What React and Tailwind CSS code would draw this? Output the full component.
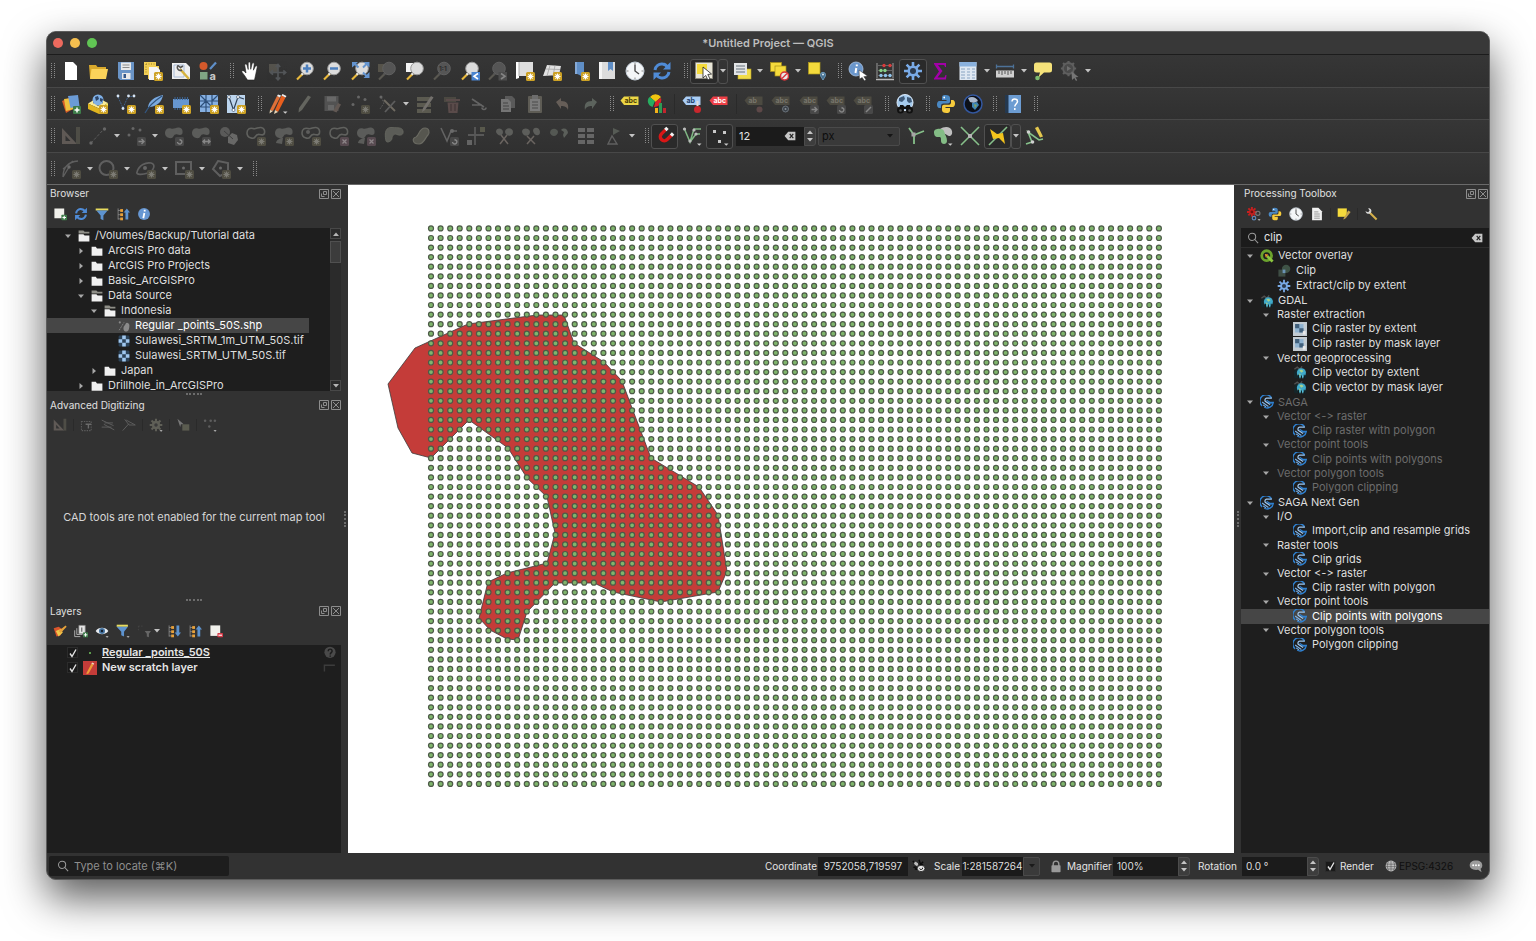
import React, { useState } from 'react';

/* ---------- small shared drawing parts ---------- */

const Star = ({ dim }) => (
  <g>
    <rect x="11" y="11" width="9" height="9" rx="1.5" fill={dim ? '#4f4d42' : '#cda225'} />
    <path d="M15.5 12.5v6M12.5 15.5h6M13.4 13.4l4.2 4.2M17.6 13.4l-4.2 4.2" stroke={dim ? '#7c7b74' : '#fff'} strokeWidth="1.1" />
  </g>
);

const Lens = ({ dim }) => (
  <g>
    <path d="M8 12.5L2 18.5" stroke={dim ? '#5a5851' : '#e9b93d'} strokeWidth="2.2" />
    <path d="M8.6 11.8L6.6 13.8" stroke={dim ? '#555' : '#e8e8e8'} strokeWidth="2" />
    <circle cx="12" cy="7.5" r="6.3" fill={dim ? '#555' : '#dcdcdc'} stroke={dim ? '#606060' : '#9a9a9a'} />
  </g>
);

const Tag = ({ fill = '#4c4a41', color = '#77756b', label = 'abc', children }) => (
  <g>
    <path d="M0.5 6.5L4 2.5H18.5V11H4Z" fill={fill} />
    <text x="4.5" y="9" fontSize="7" fontWeight="700" fill={color} fontFamily="Inter, sans-serif">{label}</text>
    {children}
  </g>
);

const BLOB = 'M1 7C1 3 4 1.5 7 2.500c3 1 5-1.500 8-1s4 3 3.500 5.500-3 2-5 1.500-3 0-4.500 2.500S1 12 1 7Z';

const Blob = ({ children }) => (
  <g>
    <path d={BLOB} fill="#5b5c5a" />
    {children}
  </g>
);

const BlobRing = ({ children }) => (
  <g>
    <path d={BLOB} fill="none" stroke="#60615e" strokeWidth="1.6" />
    {children}
  </g>
);

const DimCross = () => (
  <g>
    <rect x="11" y="11" width="9" height="9" rx="1.5" fill="#574a50" />
    <path d="M13.5 13.5l4 4M17.5 13.5l-4 4" stroke="#8c8487" strokeWidth="1.3" />
  </g>
);

const DimBadge = ({ d }) => (
  <g>
    <rect x="11" y="11" width="9" height="9" rx="1.5" fill="#484848" />
    <path d={d} fill="none" stroke="#868686" strokeWidth="1.4" />
  </g>
);

const GEAR = 'M10 1v18M1 10h18M3.6 3.6l12.8 12.8M16.4 3.6L3.6 16.4';
const TAIL = 'M15 17.5h4.5l-2.2 2.2Z';
const MOVE = 'M12.5 15.5h5M15.5 13l2.5 2.5-2.5 2.5';
const TURN = 'M13.5 16a2.2 2.2 0 104-1.5l-2-1';

/* ---------- icon drawings, all on a 20 x 20 grid ---------- */

const ICONS = {
  'new project': <path d="M4 1h8l4 4v14H4Z" fill="#fff" />,
  'open project': (
    <g>
      <path d="M1 4h7l1.5 2H18v11H2Z" fill="#d9a92c" />
      <path d="M3.5 8H20l-2 10H2Z" fill="#fbd35a" />
    </g>
  ),
  'save project': (
    <g>
      <path d="M2 1h16v18H4l-2-2Z" fill="#6a94c6" />
      <rect x="5" y="1.5" width="10" height="7.5" fill="#e9e9e9" />
      <path d="M6.5 4h7M6.5 6.500h7" stroke="#8b8b8b" />
      <rect x="6" y="12" width="8.5" height="6" fill="#e9e9e9" />
      <rect x="7.5" y="13" width="2.5" height="4" fill="#35588a" />
    </g>
  ),
  'new print layout': (
    <g>
      <path d="M1 1h12v4h3v13H5v-4H1Z" fill="#f2cf55" />
      <path d="M6 6h8l3 3v10H6Z" fill="#f5f5f5" />
      <path d="M3 3v10M3 3h9" stroke="#9a7f25" strokeDasharray="1 1.5" />
      <Star />
    </g>
  ),
  'layout manager': (
    <g>
      <path d="M1 2h14l4 4v12H1Z" fill="#efefef" />
      <path d="M3 4h10v12H3Z" fill="none" stroke="#a9bcd8" />
      <path d="M9 8l9 10" stroke="#d7b33c" strokeWidth="2.4" />
      <path d="M7 4.5c-2 3 1 6 4 4.5M7 4.5l2.5 2L12 5" fill="none" stroke="#555" strokeWidth="1.5" />
    </g>
  ),
  'style manager': (
    <g>
      <circle cx="5.5" cy="5" r="4" fill="#d4592b" />
      <path d="M12 8l6-6.5" stroke="#5f8fc9" strokeWidth="2.2" />
      <rect x="2" y="11" width="7.5" height="7.5" fill="#7fa585" />
      <text x="11.5" y="18.5" fontSize="11" fontWeight="700" fill="#c9c9c9" fontFamily="Inter, sans-serif">a</text>
    </g>
  ),
  pan: (
    <path d="M7.5 19C5 15 3.5 13 2 11.2c-.8-1.4 1-2.2 2.2-.9L6 12 4.8 4.5c-.2-1.7 1.7-2 2.2-.4L8.200 8.500V2c.1-1.500 2.100-1.500 2.200 0l.3 6.300 1.400-5.600c.5-1.400 2.300-1 2.100.5L13.400 9.200l1.900-3.800c.7-1.200 2.200-.5 1.900.8L15.800 13l-1.300 6Z" fill="#fff" stroke="#222" strokeWidth=".6" />
  ),
  'pan to selection': (
    <g opacity=".75">
      <path d="M2 3h9v8H2Z" fill="#5f5d55" />
      <path d="M11 4v15M3.5 11.5h15M8.8 6L11 3.5 13.2 6M8.8 16.5l2.2 2.3 2.2-2.3M6 9.3l-2.5 2.2L6 13.7M16.3 9.3l2.4 2.2-2.4 2.2" fill="none" stroke="#5e6266" strokeWidth="1.7" />
    </g>
  ),
  'zoom in': <g><Lens /><path d="M12 3.5v8M8 7.5h8" stroke="#4d7fbd" strokeWidth="2.5" /></g>,
  'zoom out': <g><Lens /><path d="M8 7.5h8" stroke="#4d7fbd" strokeWidth="2.5" /></g>,
  'zoom full': (
    <g>
      <Lens />
      <path d="M2 1h6L6.200 2.800l3 3-1.400 1.400-3-3L2 6.500ZM19.500 1h-6l1.800 1.800-3 3 1.400 1.400 3-3 2.800 2.300ZM19.500 17h-6l1.800-1.800-3-3 1.400-1.400 3 3 2.800-2.800Z" fill="#6494cf" />
    </g>
  ),
  'zoom to selection': <g><path d="M1 3h9v8H1Z" fill="#56534a" /><Lens dim /></g>,
  'zoom to layer': <g><path d="M1 2h9v9H1Z" fill="#f4f4f4" /><Lens /></g>,
  'zoom native': (
    <g>
      <Lens dim />
      <text x="7" y="10" fontSize="6.500" fontWeight="700" fill="#2d2d2d" fontFamily="Inter, sans-serif">1:1</text>
    </g>
  ),
  'zoom last': <g><Lens /><rect x="11.5" y="11" width="8.5" height="8.5" fill="#4a84cf" /><path d="M18 12.5l-4 2.7 4 2.8" fill="none" stroke="#fff" strokeWidth="1.6" /></g>,
  'zoom next': <g><Lens dim /><rect x="11.5" y="11" width="8.5" height="8.5" fill="#4c4c4c" /><path d="M14 12.5l4 2.7-4 2.8" fill="none" stroke="#858585" strokeWidth="1.6" /></g>,
  'new map view': (
    <g>
      <path d="M1 1h17v14H1Z" fill="#dedede" />
      <path d="M1 1h3v16l-3 1Z" fill="#fff" />
      <path d="M4 1v14" stroke="#aaa" />
      <Star />
    </g>
  ),
  'new 3d map view': (
    <g>
      <path d="M5 4l14 1-2 9L1 15Z" fill="#e2e2e2" />
      <path d="M4 8l14 .5M8 4.5L5 15M13 4.5L11 15" stroke="#a5a5a5" strokeWidth=".8" />
      <Star />
    </g>
  ),
  'new bookmark': <g><path d="M5 1h9v16l-4.5-3L5 12Z" fill="#5f8ec6" /><path d="M5 1h2v12H5Z" fill="#86aad6" /><Star /></g>,
  'show bookmarks': (
    <g>
      <path d="M2 1h16v17H2Z" fill="#dcdcdc" />
      <path d="M2 1h3v17H2Z" fill="#f4f4f4" />
      <path d="M11 1h5v9l-2.5-2L11 10Z" fill="#5f8ec6" />
    </g>
  ),
  'temporal controller': (
    <g>
      <circle cx="10" cy="10" r="9" fill="#f4f6f8" stroke="#c9d3dd" />
      <path d="M10 3.5V10l4 3" fill="none" stroke="#4a4a4a" strokeWidth="1.4" />
      <path d="M10 1.500v2M10 16.500v2M1.500 10h2M16.500 10h2" stroke="#8a8a8a" />
    </g>
  ),
  refresh: (
    <g fill="none" stroke="#4f8bd6" strokeWidth="3">
      <path d="M3 9c.5-4 4-6.500 7.500-6 2.300.2 4 1.500 5 3" />
      <path d="M17 11c-.5 4-4 6.500-7.500 6-2.300-.2-4-1.500-5-3" />
      <path d="M18.500 1v7.500H11ZM1.500 19v-7.500H9Z" fill="#4f8bd6" stroke="none" />
    </g>
  ),
  'select features': (
    <g>
      <rect x="1.5" y="1.5" width="17" height="16" fill="#e8e6d8" stroke="#8d8a7d" strokeDasharray="2 1.5" />
      <rect x="3" y="3" width="10" height="10" fill="#f5db3c" />
      <path d="M9 6l8.5 7-3.7.5 2.2 4.5-2.200 1-2-4.500L9 17Z" fill="#fff" stroke="#222" strokeWidth=".8" />
    </g>
  ),
  'select by value': (
    <g>
      <rect x="6" y="8" width="13" height="10" fill="#f1dc49" stroke="#b8a224" strokeWidth=".6" />
      <rect x="2" y="2" width="13" height="12" fill="#e2e4e6" />
      <path d="M4 5h9M4 8h9M4 11h9" stroke="#8f979f" strokeWidth="1.3" />
    </g>
  ),
  'deselect all': (
    <g>
      <rect x="1.5" y="1.5" width="11" height="9" fill="#f5db3c" stroke="#a58f18" strokeWidth=".7" />
      <rect x="6" y="5" width="11" height="10" fill="#f5db3c" stroke="#a58f18" strokeWidth=".7" />
      <circle cx="15.5" cy="15" r="4" fill="#e9e9e9" stroke="#d8343a" strokeWidth="1.5" />
      <path d="M13 17.5l5-5" stroke="#d8343a" strokeWidth="1.5" />
    </g>
  ),
  'select by location': (
    <g>
      <rect x="1.5" y="1.5" width="11.5" height="11.5" fill="#f5db3c" stroke="#b09a1c" strokeWidth=".7" />
      <path d="M16 19c-1.5-2.5-2.500-3.500-2.500-5.200a2.500 2.500 0 015 0c0 1.700-1 2.700-2.500 5.200Z" fill="#45708f" stroke="#79a7cd" strokeWidth=".8" />
      <circle cx="16" cy="13.5" r="1" fill="#dbe8f2" />
    </g>
  ),
  identify: (
    <g>
      <circle cx="8" cy="8" r="7" fill="#6b97cc" stroke="#a9c4e6" strokeWidth=".8" />
      <path d="M8.8 3.5v1.8M8.3 7l-.8 5" stroke="#fff" strokeWidth="2" />
      <path d="M11 9l8.5 6-3.7.7 2.200 3-1.600 1-2.200-3.200L11.500 18Z" fill="#fff" stroke="#333" strokeWidth=".5" />
    </g>
  ),
  'field calculator': (
    <g>
      <path d="M2 2v15M18 2v15" stroke="#8a8a8a" strokeWidth="1.2" />
      <path d="M2 4.5h16M2 9.5h16M2 14.5h16" stroke="#666" />
      <path d="M1 18.5h18" stroke="#bcbcbc" strokeWidth="1.5" />
      <g fill="#d93b3b"><circle cx="9" cy="4.5" r="1.7" /><circle cx="15" cy="4.5" r="1.7" /></g>
      <g fill="#86cf86"><circle cx="6" cy="9.5" r="1.7" /><circle cx="10" cy="9.5" r="1.7" /></g>
      <g fill="#8fc3ea"><circle cx="6" cy="14.5" r="1.7" /><circle cx="10.5" cy="14.5" r="1.7" /><circle cx="15" cy="14.5" r="1.7" /></g>
    </g>
  ),
  toolbox: (
    <g>
      <path d={GEAR} stroke="#79aae6" strokeWidth="2.6" />
      <circle cx="10" cy="10" r="5.5" fill="#79aae6" />
      <circle cx="10" cy="10" r="3" fill="#2c3a4d" />
    </g>
  ),
  statistics: <path d="M4 2h12v4h-1l-.8-2H8l4.500 6L7.500 16.500h7l1-2.500h1L16 18.500H4v-1L9 10.500 4 3Z" fill="#a300a8" />,
  'attribute table': (
    <g>
      <rect x="1.5" y="1" width="17" height="18" fill="#dfe8f2" />
      <rect x="1.5" y="1" width="17" height="4.5" fill="#8ab1dd" />
      <path d="M3 8h4M3 11h4M3 14h4M3 17h4M9 8h3M9 11h3M9 14h3M9 17h3M14 8h3M14 11h3M14 14h3M14 17h3" stroke="#8aa4c2" strokeWidth="1.2" />
    </g>
  ),
  measure: (
    <g>
      <path d="M1 5.5h18M1.5 3.5v4M18.5 3.5v4" stroke="#4d7298" strokeWidth="1.3" />
      <rect x="1" y="9.5" width="18" height="7" fill="#d0d0d0" />
      <path d="M4 10v3M7 10v4M10 10v3M13 10v4M16 10v3" stroke="#555" />
    </g>
  ),
  'map tips': (
    <g>
      <path d="M3.5 1.500h13a2.500 2.500 0 012.500 2.500v5a2.500 2.500 0 01-2.500 2.500H11L5.500 16.500 7 11.500H3.500A2.500 2.500 0 011 9V4a2.500 2.500 0 012.500-2.500Z" fill="#f5e27a" />
      <circle cx="4.5" cy="17" r="2.3" fill="#7cba6f" />
    </g>
  ),
  'run action': (
    <g>
      <path d={GEAR} stroke="#5f5f5f" strokeWidth="2.6" transform="translate(0 -1) scale(.85)" />
      <circle cx="8.5" cy="7.5" r="5.5" fill="#4a4a4a" stroke="#5f5f5f" strokeWidth="1.8" />
      <path d="M7 5v5l4-2.5Z" fill="#6f6f6f" />
      <path d="M11.5 10.5l7 5.5-3 .3 1.700 3-1.200.7-1.700-3-2.300 2Z" fill="#757575" />
    </g>
  ),

  'data source manager': (
    <g>
      <path d="M1 7l7-3 4 11-7 4Z" fill="#d65c28" />
      <path d="M3 5l8-1 2 11-8 2Z" fill="#eec13e" />
      <path d="M7 2l10-1 1.5 11-9 2Z" fill="#6b9bd6" />
      <rect x="12" y="12" width="8" height="8" rx="1" fill="#3e7d4a" />
      <path d="M16 13.5v5M13.5 16h5" stroke="#fff" strokeWidth="1.5" />
    </g>
  ),
  'new geopackage layer': (
    <g>
      <circle cx="10" cy="6" r="5.5" fill="#7fb0e6" />
      <path d="M7 3l3-1 1 3-3 2ZM12 4l3 1-1 3-2-1Z" fill="#2d4568" />
      <path d="M0 9.500l5-3V9l5 3 5-3V6.500l5 2.500-9 5.500Z" fill="#f9ec9a" />
      <path d="M0 9.500l11 5V20L0 15Z" fill="#e0b51f" />
      <path d="M11 14.5L20 9v6L11 20Z" fill="#f8e85a" />
      <Star />
    </g>
  ),
  'new shapefile layer': (
    <g>
      <path d="M2 3L7 14L12 2.5H18" fill="none" stroke="#41628a" strokeDasharray="2 1" />
      <g fill="#d7e5f5"><circle cx="2" cy="2" r="1.4" /><circle cx="7" cy="14.5" r="1.4" /><circle cx="12.5" cy="2" r="1.4" /><circle cx="18" cy="2" r="1.4" /></g>
      <Star />
    </g>
  ),
  'new spatialite layer': (
    <g>
      <path d="M4 13C5 6 11 3 19 1c-1 6-5 11-13 12Z" fill="#7aaae0" />
      <path d="M1 19C4 13 9 8 18 2" fill="none" stroke="#32557f" strokeWidth="1.3" />
      <Star />
    </g>
  ),
  'new temporary layer': (
    <g>
      <rect x="2" y="5" width="16" height="9" fill="#6696d0" />
      <path d="M4 3v3M6.5 3v3M9 3v3M11.5 3v3M14 3v3M16.5 3v3M4 14v2M6.5 14v2M9 14v2" stroke="#3c638f" />
      <Star />
    </g>
  ),
  'new mesh layer': (
    <g>
      <rect x="1" y="1" width="18" height="17" fill="#86b0e2" />
      <path d="M1 7h18M1 13h18M7 1v17M13 1v17M1 1l6 6M7 7l6 6M13 7l6-6M1 13l6-6M13 13l6 5" stroke="#2d4f7a" strokeWidth="1.2" />
      <Star />
    </g>
  ),
  'new virtual layer': (
    <g>
      <rect x="1" y="1" width="18" height="18" fill="#bcd5ee" />
      <path d="M3 3L7.5 16 12 3l6 2" fill="none" stroke="#2f4257" strokeWidth="1.2" />
      <g fill="#fff" stroke="#2f4257" strokeWidth=".6"><circle cx="3" cy="3" r="1.5" /><circle cx="7.5" cy="16" r="1.5" /><circle cx="12" cy="3" r="1.5" /></g>
      <Star />
    </g>
  ),
  'current edits': (
    <g>
      <path d="M2 16L9 2l3 1.5L5 17Z" fill="#e07038" />
      <path d="M7 16L13.5 1.5l4 2L10 18Z" fill="#e85f1e" />
      <path d="M9 2l1-1.500 3 1-1 2ZM13.500 1.500l1-1.500 4 2-1 1.500Z" fill="#eee" />
      <path d="M2 16l3 1-3.500 2.500ZM7 16l3 2-4 2Z" fill="#e6d6b8" />
      <path d={TAIL} fill="#ccc" />
    </g>
  ),
  'toggle editing': <path d="M4 14L13 1.5l3 1.5L7 16l-3.5 2.5Z" fill="#64655f" />,
  'save edits': (
    <g opacity=".8">
      <rect x="1.5" y="2" width="14" height="15" fill="#5a5a5a" />
      <rect x="4" y="2.5" width="9" height="5" fill="#757575" />
      <rect x="5" y="11" width="6" height="5" fill="#757575" />
      <path d="M10 17l5-8 3 1.5-4.5 8Z" fill="#6e625c" />
    </g>
  ),
  'add point feature': <g><g fill="#666"><circle cx="3" cy="10.5" r="1.5" /><circle cx="8.5" cy="3" r="1.5" /><circle cx="15" cy="5.5" r="1.5" /></g><Star dim /></g>,
  'vertex tool': (
    <g>
      <path d="M3 3l3 6-4 6" fill="none" stroke="#585858" strokeDasharray="2 1" />
      <path d="M6 6l11 11" stroke="#6f6b62" strokeWidth="1.8" />
      <path d="M17 7L7 18" stroke="#5e5e5e" strokeWidth="1.8" />
      <circle cx="3" cy="3" r="1.5" fill="#686868" />
    </g>
  ),
  'modify attributes': (
    <g>
      <path d="M2 3h14v4H2ZM2 9h14v4H2ZM2 15h14v4H2Z" fill="#5b5a50" />
      <path d="M8 14l8-12 2.5 1.5L10 16l-3 2Z" fill="#73706c" />
    </g>
  ),
  'delete selected': (
    <g>
      <path d="M2 3h12v5H2Z" fill="#4b4841" />
      <path d="M4 5h14v2H4ZM5.5 8.500h11L15.500 19h-9Z" fill="#5a4b4a" />
      <path d="M9 10v7M13 10v7" stroke="#3c3232" />
    </g>
  ),
  'cut features': <path d="M2 5l12 8M2 11h10M12 13.5a2 2 0 104 0" fill="none" stroke="#646464" strokeWidth="1.6" />,
  'copy features': <g><path d="M7 2h7l3 3v9H7Z" fill="#5a5a5a" /><path d="M3 5h7l3 3v10H3Z" fill="#757575" /><path d="M5 9h5M5 12h6M5 15h6" stroke="#444" /></g>,
  'paste features': <g><rect x="3" y="2" width="14" height="17" rx="1" fill="#5e5c55" /><rect x="5" y="5" width="10" height="12" fill="#7c7c7c" /><rect x="7" y="1" width="6" height="4" fill="#6d6d6d" /><path d="M7 8h6M7 11h6M7 14h6" stroke="#4a4a4a" /></g>,
  undo: <path d="M3 8l5-4v3c6 0 8 3 7 9-1-3-3-4-7-4v3Z" fill="#665e58" />,
  redo: <path d="M17 8l-5-4v3c-6 0-8 3-7 9 1-3 3-4 7-4v3Z" fill="#5c635d" />,
  'layer labeling': <Tag fill="#ecd646" color="#4a3d05" />,
  'layer diagram': (
    <g>
      <path d="M3 3a7 7 0 0111 0L8.500 8Z" fill="#f1c40f" />
      <path d="M8 7L2.500 3a6 6 0 003 10Z" fill="#27ae60" />
      <path d="M8.500 7.500L14 4a7 7 0 01-7 9Z" fill="#d8232a" />
      <path d="M8 19v-5h3v5Z" fill="#f3b21b" /><path d="M12 19V9h3v10Z" fill="#2f9a55" /><path d="M16 19v-5h3v5Z" fill="#c1262d" />
    </g>
  ),
  'highlight pinned labels': <Tag fill="#a9cdf5" color="#20406a" label="ab"><circle cx="15.5" cy="15.5" r="3.5" fill="#c9272d" /><path d="M15.500 7v5" stroke="#ddd" strokeWidth="2" /></Tag>,
  'unplaced labels': <Tag fill="#ee4047" color="#fff" />,
  'pin labels': <Tag label="ab"><circle cx="15.5" cy="15.5" r="3" fill="#5d4848" /></Tag>,
  'show hide labels': <Tag><circle cx="14.5" cy="15" r="3" fill="#3a4148" stroke="#6b737b" /><circle cx="14.5" cy="15" r="1" fill="#8a8f95" /></Tag>,
  'move label': <Tag><DimBadge d={MOVE} /></Tag>,
  'rotate label': <Tag><DimBadge d={TURN} /></Tag>,
  'change label': <Tag><DimBadge d="M13 18l5-5" /></Tag>,
  metasearch: (
    <g>
      <circle cx="10" cy="8.5" r="8" fill="#a5cbee" stroke="#dcebfa" />
      <path d="M4 4l5-2 1 3-3 3-3-1ZM12 3l4 1 1 4-3 1-2-2Z" fill="#3d5876" />
      <circle cx="5.5" cy="16" r="3.5" fill="#111" /><circle cx="14.5" cy="16" r="3.5" fill="#111" />
      <path d="M5 11h3l2 2 2-2h3v4H5Z" fill="#111" />
      <circle cx="5.5" cy="16.5" r="1.3" fill="#555" /><circle cx="14.5" cy="16.5" r="1.3" fill="#555" />
    </g>
  ),
  python: (
    <g>
      <path d="M9.5 1C6 1 6 2.5 6 4v2h4.5v1H3.500C1.500 7 1 9 1 10.500S1.500 14 3.500 14H5v-2c0-1.700 1.200-2.500 2.500-2.500h4.500c1 0 2-.8 2-2V4c0-2-1.500-3-4.500-3Z" fill="#4a88c2" />
      <path d="M10.5 19c3.5 0 3.5-1.500 3.500-3v-2H9.500v-1h7c2 0 2.500-2 2.500-3.500S18.500 6 16.500 6H15v2.500c0 1.500-1.200 2.300-2.500 2.300H8c-1 0-2 .8-2 2V16c0 2 1.500 3 4.500 3Z" fill="#f6cb3c" />
      <circle cx="8.2" cy="3.5" r=".9" fill="#fff" />
    </g>
  ),
  'globe plugin': (
    <g>
      <circle cx="10" cy="10" r="9" fill="#0c1019" stroke="#33579f" strokeWidth="1.5" />
      <path d="M5 4c4-2 8-1 10 3l-4 2-4-1Z" fill="#aab8cc" />
      <path d="M9 9l5-1 2 3-4 5-3-3Z" fill="#3e84b4" /><path d="M11 10l3 1-2 3Z" fill="#86a35c" />
    </g>
  ),
  help: (
    <g>
      <rect x="2" y="1" width="16" height="18" fill="#6c9cd2" />
      <path d="M2 1h3.5v18H2Z" fill="#24384f" />
      <path d="M9 7.500c0-3.500 5.500-3.500 5.500 0 0 2.200-2.700 2.300-2.700 5M11.800 14v2" fill="none" stroke="#fff" strokeWidth="1.5" />
    </g>
  ),

  'cad tools': <g><path d="M1 2l15 16H1ZM4.500 9.500V15h5Z" fill="#5f5955" fillRule="evenodd" /><rect x="15" y="1" width="4" height="17" fill="#4e4d46" /></g>,
  'digitize segment': <g><path d="M3 17L16 3" stroke="#5c5c5c" strokeDasharray="3 1.5" /><circle cx="3" cy="17" r="1.7" fill="#666" /><circle cx="16.5" cy="3" r="1.7" fill="#666" /></g>,
  'move feature': <g><g fill="#666"><circle cx="3" cy="9" r="1.5" /><circle cx="7" cy="2.5" r="1.5" /><circle cx="14" cy="4" r="1.5" /></g><DimBadge d={MOVE} /></g>,
  'rotate feature': <Blob><DimBadge d={TURN} /></Blob>,
  'scale feature': <Blob><DimBadge d="M12.5 15.500h6M14 13.500l-2 2 2 2M17 13.500l2 2-2 2" /></Blob>,
  'simplify feature': <g><circle cx="6" cy="6" r="5" fill="#5a5a59" /><path d="M9 11l4-4 5 2 1 5-4 5-6-2Z" fill="#686867" /><path d="M5 5l9 8" stroke="#3f3f3f" /></g>,
  'add ring': <BlobRing><Star dim /></BlobRing>,
  'add part': <Blob><path d="M2 17c0-3 4-5 7-5l-1 6Z" fill="#5b5c5a" /><Star dim /></Blob>,
  'fill ring': <BlobRing><circle cx="7" cy="6" r="2" fill="#5d5d5c" /><Star dim /></BlobRing>,
  'delete ring': <BlobRing><DimCross /></BlobRing>,
  'delete part': <Blob><path d="M2 17c0-3 4-5 7-5l-1 6Z" fill="#5b5c5a" /><DimCross /></Blob>,
  'reshape features': <path d="M2 15C0 6 2 1 8 1.500s10-.5 11 3.500-3 5-6 3.500-5 1.500-5 4-5 5-6 2.500Z" fill="#5b5c57" stroke="#686962" strokeWidth=".8" />,
  'offset curve': <path d="M5 11c3-1 3-9 9-9 4 0 5 4 3 7-3 3-4 9-9 9-7 0-7-6-3-7Z" fill="#56564f" stroke="#6a6a62" strokeWidth="1.2" />,
  'split features': <g><path d="M2 2l6 13 4-10h6" fill="none" stroke="#636363" strokeWidth="1.6" /><circle cx="13" cy="5" r="2" fill="#6a6a6a" /><DimBadge d={TURN} /></g>,
  'split parts': <g><path d="M9 1v18M2 9h16" stroke="#585858" strokeWidth="1.8" /><path d="M1 14h5v5H1Z" fill="#646464" /><path d="M14 1h5v5h-5Z" fill="#59594c" /></g>,
  'merge features': <g><path d="M2 6c0-5 7-4 7 0s-5 5-7 0ZM11 6c0-5 8-5 8 0s-7 5-8 0Z" fill="#5d5e5b" /><path d="M7 9l7 9M13 9l-7 9" stroke="#6a6460" strokeWidth="1.5" /></g>,
  'merge attributes': <g><path d="M1 6c0-5 8-4 8 0s-6 6-8 0ZM12 5c0-5 7-4 7 1s-6 4-7-1Z" fill="#5d5e5b" /><path d="M6 10l8 8M13 10l-7 8" stroke="#6a6460" strokeWidth="1.5" /></g>,
  'join features': <g><path d="M1 7c0-6 8-5 8-1s-6 6-8 1Z" fill="#545853" /><path d="M12 4c3-3 7-1 7 3l-4 5-1-3 1-3Z" fill="#5b5f5a" /></g>,
  'attribute blocks': <path d="M2 2h7v4H2ZM2 8h7v4H2ZM2 14h7v4H2ZM11 2h7v4h-7ZM11 8h7v4h-7ZM11 14h7v4h-7Z" fill="#666" />,
  'trim extend': <g><path d="M4 18h9l-5-8Z" fill="none" stroke="#606060" strokeWidth="1.4" /><path d="M9 2l7 3-7 4Z" fill="#565b55" /></g>,
  'enable snapping': (
    <g transform="rotate(45 10 10)">
      <path d="M6 5v6a4 4 0 008 0V5" fill="none" stroke="#d81616" strokeWidth="3.4" />
      <path d="M4.3 2.500h3.400v3H4.300ZM12.300 2.500h3.400v3h-3.400Z" fill="#f2f2f2" />
    </g>
  ),
  'snapping layers': (
    <g>
      <path d="M2 2l6 14 4-13h7M8 16l6-8h4" fill="none" stroke="#7fb783" strokeWidth="1.5" />
      <g fill="#bcbcbc"><circle cx="2.5" cy="3" r="1.6" /><circle cx="8" cy="15" r="1.6" /><circle cx="12" cy="4" r="1.6" /><circle cx="14" cy="8" r="1.6" /></g>
      <path d={TAIL} fill="#ccc" />
    </g>
  ),
  'snapping type': <g fill="#c9c9c9"><rect x="4" y="4" width="3" height="3" /><rect x="14" y="5" width="3" height="3" /><rect x="9" y="14" width="3" height="3" /><path d={TAIL} /></g>,
  'topological editing': <g><path d="M3 2l5 7 10-4M8 9v9" fill="none" stroke="#86c08a" strokeWidth="1.8" /><rect x="5.5" y="6.5" width="4" height="4" fill="#a5a5a5" /></g>,
  'avoid overlap': <g><path d="M7 3c4-3 11-3 12 2s-3 6-5 4-5-1-7-2Z" fill="#bfbfbf" /><path d="M1 6c0-4 9-4 10-1 1 4 3 6 3 10s-6 4-6 0 0-4-3-4-4-2-4-5Z" fill="#84bd86" /><path d={TAIL} fill="#ccc" /></g>,
  'snap intersection': <g><path d="M1 1l18 18M19 1L1 19" stroke="#86c08a" strokeWidth="1.6" /><rect x="8" y="8" width="4" height="4" fill="#b5b5b5" /></g>,
  tracing: <g><path d="M1 19L19 1" stroke="#86c08a" strokeWidth="1.6" /><path d="M2 3l7 5 6-1 2 11-6-6-6 1Z" fill="#f3c31c" /></g>,
  'self snapping': <g><path d="M1 18l6-2-4-10 11 8 4-1" fill="none" stroke="#86c08a" strokeWidth="1.6" /><path d="M10 2l3-1.500 5 10-3 1Z" fill="#e5c84e" /><g fill="#d0d0d0"><circle cx="3.5" cy="6" r="1.8" /><circle cx="7.5" cy="16" r="1.8" /></g></g>,

  'add circular string': <g><path d="M2 18C2 9 6 3 17 2M2 10L12 2M8 8L2 18" fill="none" stroke="#5f5f5f" strokeWidth="1.4" /><circle cx="8" cy="8" r="1.7" fill="#6b6b6b" /><Star dim /></g>,
  'add circle': <g><circle cx="8.5" cy="9" r="7" fill="none" stroke="#5f5f5f" strokeWidth="2" /><Star dim /></g>,
  'add ellipse': <g><path d="M1 13C3 6 10 3 15 4s3 8-3 10-12 2-11-1Z" fill="none" stroke="#5f5f5f" strokeWidth="1.7" /><circle cx="9" cy="9" r="2" fill="#666" /><Star dim /></g>,
  'add rectangle': <g><rect x="2" y="3" width="15" height="12" fill="none" stroke="#5f5f5f" strokeWidth="2" /><circle cx="9.5" cy="9" r="1.5" fill="#6b6b6b" /><Star dim /></g>,
  'add regular polygon': <g><path d="M7 2l10 2v9l-8 4L2 10Z" fill="none" stroke="#5f5f5f" strokeWidth="2" /><circle cx="9.5" cy="9" r="1.5" fill="#6b6b6b" /><Star dim /></g>,

  'add selected layers': <g><path d="M2 2h14v14H2Z" fill="#f1f1ec" /><rect x="12" y="11" width="8" height="8" rx="1" fill="#3e7d4a" /><path d="M16 12.500v5M13.500 15h5" stroke="#fff" strokeWidth="1.6" /></g>,
  'filter browser': <g><path d="M1 2h18v3H1Z" fill="#e8dc5f" /><path d="M2 5h16l-6 7v7l-4-2v-5Z" fill="#5d93cf" /></g>,
  'collapse all': <g><path d="M3 2v16M3 5h4M3 11h4M3 17h4" fill="none" stroke="#9a9a9a" /><g fill="#e8a13a"><rect x="6" y="3" width="4" height="4" /><rect x="6" y="9" width="4" height="4" /><rect x="6" y="15" width="4" height="4" /></g><path d="M13.500 18V8H11l4.500-6L20 8h-2.500v10Z" fill="#5d93cf" /></g>,
  'expand all': <g><path d="M3 2v16M3 5h4M3 11h4M3 17h4" fill="none" stroke="#9a9a9a" /><g fill="#e8a13a"><rect x="6" y="3" width="4" height="4" /><rect x="6" y="9" width="4" height="4" /><rect x="6" y="15" width="4" height="4" /></g><path d="M13.500 2v10H11l4.500 6 4.500-6h-2.500V2Z" fill="#5d93cf" /></g>,
  properties: <g><circle cx="10" cy="10" r="8.5" fill="#6797d2" /><path d="M11 4v2.500M10.500 8.500L9 16" stroke="#fff" strokeWidth="2.6" /></g>,
  'floater settings': <g><path d="M2 5h14v13H2Z" fill="none" stroke="#5c5c5c" strokeWidth="1.5" strokeDasharray="2 1.5" /><path d="M8 9h8M12 9v6" stroke="#6b6b6b" strokeWidth="2" /></g>,
  parallel: <path d="M1 3l17 8M4 9l15 8M1 13h14M5 7h12" stroke="#5d5d5d" strokeWidth="1.4" />,
  perpendicular: <path d="M4 2l6 8 9 0M10 8L1 18M6 3l13 7" fill="none" stroke="#5d5d5d" strokeWidth="1.4" />,
  'construction settings': <g><path d={GEAR} stroke="#5f5f57" strokeWidth="3" /><circle cx="10" cy="10" r="6" fill="#5f5f57" /><circle cx="10" cy="10" r="2.5" fill="#3a3a3a" /><path d={TAIL} fill="#ccc" /></g>,
  'construction mode': <g><path d="M2 1l9 8H7l-1 4Z" fill="#777" /><rect x="9" y="9" width="10" height="9" fill="#5b5c50" /></g>,
  'construction layer': <g fill="#5e5e5e"><circle cx="3" cy="4" r="1.8" /><circle cx="11" cy="4" r="1.8" /><circle cx="17" cy="4" r="1.8" /><circle cx="9" cy="12" r="1.8" /><path d={TAIL} fill="#ccc" /></g>,
  'layer styling': <g><path d="M1 6l7-2 6 4-3 8-6 2Z" fill="#d9552c" /><path d="M4 10l7-3 3 5-6 6Z" fill="#f0c84a" /><path d="M8 10l10-8 1.500 2L11 13Z" fill="#e4a23b" /></g>,
  'add group': <g><path d="M1 9v9h8M4 6v9h8" fill="none" stroke="#b4b4b4" strokeWidth="1.3" /><path d="M7 2h9v12H7Z" fill="#e5e5e5" stroke="#8a8a8a" /><path d="M11 5v6" stroke="#777" strokeWidth="2" /><rect x="13" y="12" width="7" height="7" fill="#3e7d4a" /><path d="M16.500 13v5M14 15.500h5" stroke="#fff" strokeWidth="1.4" /></g>,
  'manage themes': <g><path d="M1 10C5 4 15 4 19 10 15 16 5 16 1 10Z" fill="#e8ecf1" /><circle cx="10" cy="10" r="4.3" fill="#44729f" /><circle cx="10" cy="10" r="1.8" fill="#15202c" /><path d={TAIL} fill="#ccc" /></g>,
  'filter legend': <g><path d="M1 1h16v3H1Z" fill="#e8dc5f" /><path d="M1 4h16l-5.500 7v7l-4-2v-5Z" fill="#5d93cf" /><path d={TAIL} fill="#ccc" /></g>,
  'filter by expression': <g><path d="M2 3h8M2 3v8" stroke="#4a4a4a" strokeDasharray="2 2" /><path d="M11 10h9l-3 4v5l-3-1v-4Z" fill="#666" /></g>,
  'remove layer': <g><path d="M2 2h14v15H2Z" fill="#f1f1ec" /><rect x="12" y="13" width="8" height="6" rx="1" fill="#d63b49" /><path d="M13.500 16h5" stroke="#fff" strokeWidth="1.6" /></g>,
  models: <g><path d="M7 0v14M0 7h14M2 2l10 10M12 2L2 12" stroke="#c4201f" strokeWidth="2.8" /><circle cx="7" cy="7" r="2" fill="#6d1010" /><circle cx="15.5" cy="9" r="3" fill="none" stroke="#777" strokeWidth="1.6" /><circle cx="10" cy="16" r="2.5" fill="none" stroke="#5d86b5" strokeWidth="1.8" /><path d={TAIL} fill="#ccc" /></g>,
  results: <g><path d="M3 1h9l5 5v13H3Z" fill="#f0f0f0" /><path d="M6 7h6M6 10h8M6 13h8M6 16h8" stroke="#777" /></g>,
  'edit in place': <g><rect x="1" y="2" width="13" height="12" fill="#f5db3c" /><path d="M9 17l7-12 3.5 2-7 9-3 2Z" fill="#c6a54e" /></g>,
  options: <g><path d="M8 8l10 10" stroke="#d5b04b" strokeWidth="3" /><path d="M2 6c1 4 6 5 8 2S9 1 6 2l2 3-2 2.500Z" fill="#d8d8d8" /></g>,

  folder: <path d="M1 3h7l2 3h9v12H1Z" fill="#f0f0f0" />,
  'folder open': <g><path d="M1 1h8l2 2h8v3H1Z" fill="#8f8f88" /><path d="M1 7h8l2 2h8v10H1Z" fill="#f0f0f0" /></g>,
  vector: <g><path d="M2 17L10 4" stroke="#888" strokeWidth="1.5" strokeDasharray="3 1.5" /><circle cx="3" cy="4" r="1.8" fill="#888" /><path d="M9 14c0-4 3-5 4-8s6-1 6 3-1 9-4 10-6-1-6-5Z" fill="#8a8a8a" /></g>,
  raster: <g><rect x="1" y="1" width="18" height="18" rx="2" fill="#2c4257" /><path d="M7 1h6v6H7ZM1 7h6v6H1ZM13 7h6v6h-6ZM7 13h6v6H7Z" fill="#9fc6ee" /></g>,
  qgis: <g><circle cx="9.5" cy="9.5" r="7" fill="none" stroke="#6ba32d" strokeWidth="4" /><path d="M10 10l8 8" stroke="#8cc63f" strokeWidth="4" /><path d="M7 7l5 1-4 4Z" fill="#f0932b" /></g>,
  'clip algorithm': <g><rect x="2" y="8" width="10" height="10" fill="#3e4d44" /><circle cx="13" cy="7" r="6" fill="#3f5346" /><path d="M8 8h4v5H8Z" fill="#6b93b5" /></g>,
  gdal: (
    <g>
      <path d="M2 19C0 11 2 5 9 4s11 5 10 15Z" fill="#15262a" />
      <path d="M2 6l4-3 4 3 3-4" fill="none" stroke="#4f4f4f" strokeWidth="2" />
      <circle cx="12" cy="11" r="6.5" fill="#3fa9c9" />
      <path d="M9 8c2-2 5-1 6 1l-3 2ZM8 12l3 1-1 3Z" fill="#a7d08c" />
      <path d="M8 14v5M12 15v4M16 14v5" stroke="#0e1a1c" strokeWidth="1.5" />
      <path d="M10 15v4M14 15v4" stroke="#62c4dd" strokeWidth="1.5" />
    </g>
  ),
  'clip raster': <g><rect width="20" height="20" fill="#c2cbd2" /><rect x="3" y="3" width="12" height="12" fill="#8fb3d1" /><path d="M3 3h6v6H3ZM9 9h6v6H9Z" fill="#41607c" /><path d="M14 13h4v5h-4Z" fill="#e9e9e9" /></g>,
  saga: (
    <g fill="none">
      <path d="M16.500 4A9 9 0 103 15.500" stroke="#2f80d0" strokeWidth="2" />
      <path d="M6 17.500A9 9 0 0019 10.500H12" stroke="#2f80d0" strokeWidth="2" />
      <path d="M17 4.500H9.500a3 3 0 00-2 4.500l7 4.500" stroke="#9fc7ef" strokeWidth="1.8" />
      <path d="M3 10l9 6.500M4.500 14l4 3" stroke="#7fb4ea" strokeWidth="1.5" />
      <path d="M9.500 7.500l7 5" stroke="#2f80d0" strokeWidth="1.6" />
    </g>
  ),
  bee: (
    <g>
      <path d="M8 9l8-1M9 15l-5-1M10 1l2 6M16 4l-4 4M2 12l5-1M1 3l4 3" stroke="#0b0b0b" strokeWidth="2" />
      <ellipse cx="6" cy="7" rx="4" ry="3" fill="#bdbdbd" stroke="#0b0b0b" transform="rotate(40 6 7)" />
      <ellipse cx="13" cy="13.5" rx="5.5" ry="4.500" fill="#e6e6e6" stroke="#0b0b0b" />
      <path d="M11 13.500a2 2 0 104-1" fill="none" stroke="#0b0b0b" strokeWidth="1.4" />
    </g>
  ),
  lock: <g><path d="M6 10V7a4 4 0 018 0v3" fill="none" stroke="#999" strokeWidth="2" /><rect x="3.5" y="9" width="13" height="10" rx="1" fill="#9a9a9a" /></g>,
  projection: <g><circle cx="10" cy="10" r="9" fill="#bdbdbd" /><path d="M2 7h16M1.500 11h17M4 15h12M10 1.500v17M6 2.500c-3 5-3 10 0 15M14 2.500c3 5 3 10 0 15" fill="none" stroke="#4d4d4d" strokeWidth=".9" /></g>,
  messages: <g><path d="M10 2c6 0 9 3 9 7 0 2.500-1 4-2.500 5L18 19l-5-3.500C5 16.500 1 13 1 9s3-7 9-7Z" fill="#9b9b9b" /><circle cx="6" cy="9" r="1.4" fill="#fff" /><circle cx="10" cy="9" r="1.4" fill="#fff" /><circle cx="14" cy="9" r="1.4" fill="#fff" /></g>,
  search: <g fill="none" stroke="#9a9a9a" strokeWidth="1.7"><circle cx="8.5" cy="8" r="6" /><path d="M13 12.500l5.500 6" /></g>,
  clear: <g><path d="M1 10l6-7h12v14H7Z" fill="#c6c6c6" /><path d="M9.500 6.500l6 7M15.500 6.500l-6 7" stroke="#222" strokeWidth="2" /></g>,
  scratch: <g><rect width="20" height="20" fill="#c43c39" /><path d="M5 17L12 4l3 1.500L8 18l-3 1Z" fill="#ee9b35" /><path d="M12 4l1-2 3 1.500-1 2Z" fill="#f1e0c4" /></g>,
  question: <g><circle cx="10" cy="9" r="8" fill="#4a4a4a" /><path d="M7.500 7.500c0-4 5.500-4 5.500 0 0 2-2.700 2-2.700 4.500M10.300 13.500v2" fill="none" stroke="#1c1c1c" strokeWidth="2" /></g>,
  memory: <path d="M2 15V6h15" fill="none" stroke="#3c3c3c" strokeWidth="2" />,
};

function Icon({ name, className = 'size-5' }) {
  return (
    <svg viewBox="0 0 20 20" className={`${className} shrink-0`} aria-hidden="true">
      {ICONS[name]}
    </svg>
  );
}

function Caret({ className = 'fill-[#c4c4c4]' }) {
  return (
    <svg viewBox="0 0 6 4" className={`h-1 w-1.5 shrink-0 ${className}`} aria-hidden="true">
      <path d="M0 0h6L3 3.5Z" />
    </svg>
  );
}

/* ---------- toolbars ---------- */

function Grip({ className = 'ml-1.5' }) {
  return (
    <svg viewBox="0 0 8 16" className={`h-4 w-2 shrink-0 ${className}`} aria-hidden="true">
      <path d="M2.5 0v16M5.5 0v16" stroke="#8a8a8a" strokeDasharray="1 1" />
    </svg>
  );
}

function Tool({ name, active }) {
  return (
    <button
      type="button"
      aria-label={name}
      className={`flex h-[25px] min-w-0 flex-1 items-center justify-center rounded-[3px] border ${
        active ? 'border-[#505050] bg-[#2a2a2a]' : 'border-transparent'
      }`}
    >
      <Icon name={name} />
    </button>
  );
}

function Tools({ className, items, active = [] }) {
  return (
    <div className={`flex shrink-0 ${className}`}>
      {items.map((n) => <Tool key={n} name={n} active={active.includes(n)} />)}
    </div>
  );
}

function SplitTools({ className, items, active }) {
  return (
    <div className={`flex shrink-0 ${className}`}>
      {items.map((n) => (
        <div key={n} className="flex flex-1">
          <Tool name={n} active={n === active} />
          <button
            type="button"
            aria-label={`${n} menu`}
            className={`flex h-[25px] w-2.5 items-center justify-center rounded-[3px] border ${
              n === active ? 'border-[#505050]' : 'border-transparent'
            }`}
          >
            <Caret />
          </button>
        </div>
      ))}
    </div>
  );
}

function Bar({ children, className = 'h-8 border-[#484848]' }) {
  return (
    <div
      role="toolbar"
      className={`flex shrink-0 items-center overflow-hidden border-b bg-linear-to-b from-[#363636] to-[#303030] pl-0.5 ${className}`}
    >
      {children}
    </div>
  );
}

const Divider = () => (
  <div className="flex w-[7px] shrink-0 justify-center"><span className="h-5 w-px bg-[#2a2a2a]" /></div>
);

function Stepper({ label }) {
  return (
    <div className="flex h-[19px] w-3 shrink-0 flex-col rounded-r-[3px] border border-[#4c4c4c] bg-[#3d3d3d]">
      <button type="button" aria-label={`Increase ${label}`} className="flex flex-1 items-center justify-center"><Caret className="rotate-180 fill-[#c4c4c4]" /></button>
      <button type="button" aria-label={`Decrease ${label}`} className="flex flex-1 items-center justify-center"><Caret /></button>
    </div>
  );
}

function Toolbars() {
  return (
    <div className="shrink-0">
      <Bar className="h-[33px] border-[#484848]">
        <Grip className="" />
        <Tools className="w-[165px]" items={['new project', 'open project', 'save project', 'new print layout', 'layout manager', 'style manager']} />
        <Grip />
        <Tools
          className="w-[440px]"
          items={['pan', 'pan to selection', 'zoom in', 'zoom out', 'zoom full', 'zoom to selection', 'zoom to layer', 'zoom native', 'zoom last', 'zoom next', 'new map view', 'new 3d map view', 'new bookmark', 'show bookmarks', 'temporal controller', 'refresh']}
        />
        <Grip />
        <SplitTools className="w-[113px]" items={['select features', 'select by value', 'deselect all']} active="select features" />
        <Tools className="w-[27px]" items={['select by location']} />
        <Grip />
        <Tools className="w-[110px]" items={['identify', 'field calculator', 'toolbox', 'statistics']} active={['toolbox']} />
        <SplitTools className="w-[75px]" items={['attribute table', 'measure']} />
        <Tools className="w-[27px]" items={['map tips']} />
        <SplitTools className="w-[37px]" items={['run action']} />
      </Bar>

      <Bar>
        <Grip className="" />
        <Tools
          className="w-[193px]"
          items={['data source manager', 'new geopackage layer', 'new shapefile layer', 'new spatialite layer', 'new temporary layer', 'new mesh layer', 'new virtual layer']}
        />
        <Grip />
        <Tools className="w-[110px]" items={['current edits', 'toggle editing', 'save edits', 'add point feature']} />
        <SplitTools className="w-[37px]" items={['vertex tool']} />
        <Tools className="w-[193px]" items={['modify attributes', 'delete selected', 'cut features', 'copy features', 'paste features', 'undo', 'redo']} />
        <Grip className="ml-1" />
        <Tools className="w-[55px]" items={['layer labeling', 'layer diagram']} />
        <Divider />
        <Tools className="w-[55px]" items={['highlight pinned labels', 'unplaced labels']} />
        <Divider />
        <Tools className="w-[137px]" items={['pin labels', 'show hide labels', 'move label', 'rotate label', 'change label']} />
        <Grip />
        <Tools className="w-[27px]" items={['metasearch']} />
        <Grip />
        <Tools className="w-[55px]" items={['python', 'globe plugin']} />
        <Grip className="ml-1" />
        <Tools className="w-[27px]" items={['help']} />
        <Grip />
      </Bar>

      <Bar className="h-[33px] border-[#484848]">
        <Grip className="" />
        <Tools className="w-[27px]" items={['cad tools']} />
        <SplitTools className="w-[76px]" items={['digitize segment', 'move feature']} />
        <Tools
          className="w-[440px]"
          items={['rotate feature', 'scale feature', 'simplify feature', 'add ring', 'add part', 'fill ring', 'delete ring', 'delete part', 'reshape features', 'offset curve', 'split features', 'split parts', 'merge features', 'merge attributes', 'join features', 'attribute blocks']}
        />
        <SplitTools className="w-[37px]" items={['trim extend']} />
        <Grip />
        <Tools className="w-[82px]" items={['enable snapping', 'snapping layers', 'snapping type']} active={['enable snapping', 'snapping type']} />
        <div className="ml-[3px] flex h-[19px] w-[68px] shrink-0 items-center bg-[#1b1b1b] pr-2">
          <input aria-label="Snapping tolerance" defaultValue="12" className="w-full min-w-0 flex-1 bg-transparent pl-[3px] text-[11px] text-[#e4e4e4] outline-none" />
          <button type="button" aria-label="Clear tolerance"><Icon name="clear" className="size-3" /></button>
        </div>
        <Stepper label="tolerance" />
        <div className="ml-0.5 grid w-[82px] shrink-0 items-center rounded-[2px] border border-[#4a4a4a] bg-[#393939]">
          <select aria-label="Snapping unit" className="col-start-1 row-start-1 h-[17px] appearance-none bg-transparent pl-[3px] text-[11px] text-[#0d0d0d] outline-none">
            <option>px</option>
            <option>meters</option>
          </select>
          <span className="pointer-events-none col-start-1 row-start-1 mr-1.5 justify-self-end"><Caret className="fill-[#151515]" /></span>
        </div>
        <Tools className="ml-0.5 w-[82px]" items={['topological editing', 'avoid overlap', 'snap intersection']} />
        <SplitTools className="w-[37px]" items={['tracing']} active="tracing" />
        <Tools className="w-[27px]" items={['self snapping']} />
      </Bar>

      <Bar className="h-8 border-[#6a6a6a]">
        <Grip className="" />
        <SplitTools className="w-[188px]" items={['add circular string', 'add circle', 'add ellipse', 'add rectangle', 'add regular polygon']} />
        <Grip />
      </Bar>
    </div>
  );
}

/* ---------- docks ---------- */

function DockTitle({ title, className = 'h-4' }) {
  return (
    <div className={`flex shrink-0 items-center pl-[3px] ${className}`}>
      <h2 className="flex-1 text-[10px] text-[#e0e0e0]">{title}</h2>
      <button type="button" aria-label={`Float ${title}`}>
        <svg viewBox="0 0 10 10" className="size-2.5" fill="none" stroke="#8d8d8d">
          <path d="M.5.5h9v9h-9ZM4.5 2.500h3v3h-3ZM2.500 4.500v3h3" />
        </svg>
      </button>
      <button type="button" aria-label={`Close ${title}`} className="ml-0.5">
        <svg viewBox="0 0 10 10" className="size-2.5" fill="none" stroke="#8d8d8d">
          <path d="M.5.5h9v9h-9ZM2 2l6 6M8 2L2 8" />
        </svg>
      </button>
    </div>
  );
}

// '|' draws a divider, 'v' the menu arrow of the tool before it
function DockTools({ items, className = 'h-[26px]' }) {
  return (
    <div role="toolbar" className={`flex shrink-0 items-center gap-[7px] pb-0.5 pl-1.5 ${className}`}>
      {items.map((n, i) =>
        n === '|' ? <span key={i} className="-mx-px h-3 w-px bg-[#2a2a2a]" />
        : n === 'v' ? <Caret key={i} className="-ml-1 fill-[#c4c4c4]" />
        : <button key={n} type="button" aria-label={n}><Icon name={n} className="size-3.5" /></button>
      )}
    </div>
  );
}

const SplitterH = () => (
  <div className="flex h-1.5 shrink-0 items-center justify-center">
    <span className="w-4 border-t-2 border-dotted border-[#6c6c6c]" />
  </div>
);

const SplitterV = () => (
  <div className="flex w-[7px] shrink-0 items-center justify-center">
    <span className="h-4 border-l-2 border-dotted border-[#6c6c6c]" />
  </div>
);

function Expander({ open, label }) {
  return (
    <button type="button" aria-label={`Toggle ${label}`} className="flex w-2 shrink-0 items-center justify-center">
      <svg viewBox="0 0 8 8" className={`size-2 fill-[#a8a8a8] ${open ? '' : '-rotate-90'}`}>
        <path d="M1 2.5h6L4 6Z" />
      </svg>
    </button>
  );
}

const BROWSER = [
  { pad: 'pl-[17px]', open: true, icon: 'folder open', text: '/Volumes/Backup/Tutorial data' },
  { pad: 'pl-[30px]', open: false, icon: 'folder', text: 'ArcGIS Pro data' },
  { pad: 'pl-[30px]', open: false, icon: 'folder', text: 'ArcGIS Pro Projects' },
  { pad: 'pl-[30px]', open: false, icon: 'folder', text: 'Basic_ArcGISPro' },
  { pad: 'pl-[30px]', open: true, icon: 'folder open', text: 'Data Source' },
  { pad: 'pl-[43px]', open: true, icon: 'folder open', text: 'Indonesia' },
  { pad: 'pl-[57px]', icon: 'vector', text: 'Regular _points_50S.shp', selected: true },
  { pad: 'pl-[57px]', icon: 'raster', text: 'Sulawesi_SRTM_1m_UTM_50S.tif' },
  { pad: 'pl-[57px]', icon: 'raster', text: 'Sulawesi_SRTM_UTM_50S.tif' },
  { pad: 'pl-[43px]', open: false, icon: 'folder', text: 'Japan' },
  { pad: 'pl-[30px]', open: false, icon: 'folder', text: 'Drillhole_in_ArcGISPro' },
];

function BrowserDock() {
  return (
    <section>
      <DockTitle title="Browser" className="h-[17px]" />
      <DockTools items={['add selected layers', 'refresh', 'filter browser', 'collapse all', 'properties']} />
      <div className="flex h-[163px] bg-[#1e1e1e]">
        <ul className="min-w-0 flex-1 overflow-hidden pr-[21px]">
          {BROWSER.map((n) => (
            <li
              key={n.text}
              className={`flex h-[15px] items-center text-[11px] whitespace-nowrap ${n.pad} ${
                n.selected ? 'bg-[#464646] text-white' : 'text-[#dedede]'
              }`}
            >
              {n.open === undefined ? <span className="w-2 shrink-0" /> : <Expander open={n.open} label={n.text} />}
              <Icon name={n.icon} className="mr-[5px] ml-1.5 size-3" />
              {n.text}
            </li>
          ))}
        </ul>
        <div className="flex w-[11px] shrink-0 flex-col bg-[#2b2b2b]">
          <button type="button" aria-label="Scroll up" className="flex h-[11px] items-center justify-center border border-[#484848]"><Caret className="rotate-180 fill-[#b5b5b5]" /></button>
          <div className="mt-0.5 h-[22px] border border-[#505050] bg-[#3c3c3c]" />
          <button type="button" aria-label="Scroll down" className="mt-auto flex h-[11px] items-center justify-center border border-[#484848]"><Caret className="fill-[#b5b5b5]" /></button>
        </div>
      </div>
    </section>
  );
}

function CheckBox({ label, checked, onChange }) {
  return (
    <span className="grid size-[11px] shrink-0 place-items-center">
      <input
        type="checkbox"
        aria-label={label}
        checked={checked}
        onChange={onChange}
        className="peer col-start-1 row-start-1 size-[11px] appearance-none border border-[#2c2c2c] bg-[#1a1a1a]"
      />
      <svg viewBox="0 0 10 10" className="pointer-events-none invisible col-start-1 row-start-1 size-2.5 peer-checked:visible" fill="none" stroke="#e2e2e2" strokeWidth="1.4">
        <path d="M2 5.5L4 8.5 8 1.5" />
      </svg>
    </span>
  );
}

function LayersDock() {
  const [visible, setVisible] = useState({ points: true, scratch: true });
  const toggle = (id) => setVisible((v) => ({ ...v, [id]: !v[id] }));

  return (
    <section className="flex h-[250px] shrink-0 flex-col">
      <DockTitle title="Layers" />
      <DockTools items={['layer styling', 'add group', 'manage themes', 'filter legend', 'filter by expression', 'v', 'expand all', 'collapse all', 'remove layer']} />
      <ul className="flex-1 bg-[#1e1e1e] text-[11px] font-semibold text-[#e6e6e6]">
        <li className="flex h-[15px] items-center pr-1 pl-5">
          <CheckBox label="Regular _points_50S" checked={visible.points} onChange={() => toggle('points')} />
          <span className="flex w-6 justify-center"><span className="size-0.5 bg-[#5c9a4c]" /></span>
          <span className="flex-1 underline">Regular _points_50S</span>
          <Icon name="question" className="size-3.5" />
        </li>
        <li className="flex h-[15px] items-center pr-1 pl-5">
          <CheckBox label="New scratch layer" checked={visible.scratch} onChange={() => toggle('scratch')} />
          <span className="flex w-6 justify-center"><Icon name="scratch" className="size-3.5" /></span>
          <span className="flex-1">New scratch layer</span>
          <Icon name="memory" className="size-3.5" />
        </li>
      </ul>
    </section>
  );
}

/* kind: root = provider, group = category without icon, near / tool = algorithm */
const TOOLBOX = [
  { kind: 'root', icon: 'qgis', text: 'Vector overlay' },
  { kind: 'near', icon: 'clip algorithm', text: 'Clip' },
  { kind: 'near', icon: 'toolbox', text: 'Extract/clip by extent' },
  { kind: 'root', icon: 'gdal', text: 'GDAL' },
  { kind: 'group', text: 'Raster extraction' },
  { kind: 'tool', icon: 'clip raster', text: 'Clip raster by extent' },
  { kind: 'tool', icon: 'clip raster', text: 'Clip raster by mask layer' },
  { kind: 'group', text: 'Vector geoprocessing' },
  { kind: 'tool', icon: 'gdal', text: 'Clip vector by extent' },
  { kind: 'tool', icon: 'gdal', text: 'Clip vector by mask layer' },
  { kind: 'root', icon: 'saga', text: 'SAGA', off: true },
  { kind: 'group', text: 'Vector <-> raster', off: true },
  { kind: 'tool', icon: 'saga', text: 'Clip raster with polygon', off: true },
  { kind: 'group', text: 'Vector point tools', off: true },
  { kind: 'tool', icon: 'saga', text: 'Clip points with polygons', off: true },
  { kind: 'group', text: 'Vector polygon tools', off: true },
  { kind: 'tool', icon: 'saga', text: 'Polygon clipping', off: true },
  { kind: 'root', icon: 'saga', text: 'SAGA Next Gen' },
  { kind: 'group', text: 'I/O' },
  { kind: 'tool', icon: 'saga', text: 'Import,clip and resample grids' },
  { kind: 'group', text: 'Raster tools' },
  { kind: 'tool', icon: 'saga', text: 'Clip grids' },
  { kind: 'group', text: 'Vector <-> raster' },
  { kind: 'tool', icon: 'saga', text: 'Clip raster with polygon' },
  { kind: 'group', text: 'Vector point tools' },
  { kind: 'tool', icon: 'saga', text: 'Clip points with polygons', selected: true },
  { kind: 'group', text: 'Vector polygon tools' },
  { kind: 'tool', icon: 'saga', text: 'Polygon clipping' },
];

const ROW = {
  root: 'h-[15px] pl-[5px]',
  group: 'flex-1 pl-[21px]',
  near: 'h-[15px] pl-[36px]',
  tool: 'h-[15px] pl-[52px]',
};

function ToolboxDock() {
  const [query, setQuery] = useState('clip');

  return (
    <aside className="flex w-[248px] shrink-0 flex-col">
      <DockTitle title="Processing Toolbox" className="h-[17px] pr-px" />
      <DockTools items={['models', 'python', 'temporal controller', 'results', '|', 'edit in place', '|', 'options']} />
      <div className="flex h-5 shrink-0 items-center border-b border-[#2d2d2d] bg-[#1b1b1b] px-1.5">
        <Icon name="search" className="size-3" />
        <input
          aria-label="Search algorithms"
          value={query}
          onChange={(e) => setQuery(e.target.value)}
          className="min-w-0 flex-1 bg-transparent pl-[5px] text-[11px] text-[#e4e4e4] outline-none"
        />
        <button type="button" aria-label="Clear search" onClick={() => setQuery('')}><Icon name="clear" className="size-3" /></button>
      </div>
      <div className="flex-1 bg-[#1e1e1e]">
        <ul className="flex h-[404px] flex-col [font-variant-ligatures:none]">
          {TOOLBOX.map((n, i) => (
            <li
              key={i}
              className={`flex items-center text-[11px] leading-[13px] whitespace-nowrap ${ROW[n.kind]} ${
                n.selected ? 'bg-[#464646] text-white' : n.off ? 'text-[#6c6c6c]' : 'text-[#dedede]'
              }`}
            >
              {(n.kind === 'root' || n.kind === 'group') && <Expander open label={n.text} />}
              {n.icon && <Icon name={n.icon} className={n.kind === 'root' ? 'mr-1 ml-1.5 size-3.5' : 'mr-[5px] size-3.5'} />}
              <span className={n.kind === 'group' ? 'ml-[7px]' : ''}>{n.text}</span>
            </li>
          ))}
        </ul>
      </div>
    </aside>
  );
}

/* ---------- map ---------- */

const STEP = 9.577;
const SCRATCH_POLYGON =
  '40,198 67,162 120,138 189,129 216,129 226,157 256,176 274,195 284,222 303,272 351,301 370,329 379,385 370,406 313,416 265,406 246,397 207,397 179,426 170,454 159,453 142,444 131,432 140,396 159,387 199,377 207,347 199,311 179,292 160,262 121,234 83,272 64,267 50,242';

// every point is a zero-length dash, the round cap draws the marker
const POINTS = Array.from({ length: 59 }, (_, r) =>
  Array.from({ length: 77 }, (_, c) => `M${(83 + c * STEP).toFixed(1)} ${(42.4 + r * STEP).toFixed(1)}h0`).join('')
).join('');

function MapCanvas() {
  return (
    <main className="flex min-w-0 flex-1 bg-white pt-px">
      <svg viewBox="0 0 886 667" className="h-0 min-h-full w-full" role="img" aria-label="Map canvas">
        <polygon points={SCRATCH_POLYGON} fill="#c43c39" stroke="#3b3b3b" strokeWidth=".8" />
        <path d={POINTS} fill="none" stroke="#4d5a48" strokeWidth="6.2" strokeLinecap="round" />
        <path d={POINTS} fill="none" stroke="#7fb56c" strokeWidth="3.8" strokeLinecap="round" />
      </svg>
    </main>
  );
}

/* ---------- status bar ---------- */

const FIELD = 'h-[19px] min-w-0 bg-[#1b1b1b] text-[10px] text-[#dedede] outline-none';

function StatusBar() {
  const [render, setRender] = useState(true);

  return (
    <footer className="flex h-[26px] shrink-0 items-center pr-1.5 pl-0.5 text-[10px] text-[#e4e4e4]">
      <div className="flex h-5 w-[180px] items-center rounded-[2px] bg-[#1d1d1d] pl-2">
        <Icon name="search" className="size-3" />
        <input aria-label="Locator" placeholder="Type to locate (⌘K)" className="min-w-0 flex-1 bg-transparent pl-[5px] text-[11px] outline-none placeholder:text-[#8e8e8e]" />
      </div>

      <label htmlFor="coord" className="ml-auto w-[53px]">Coordinate</label>
      <input id="coord" defaultValue="9752058,719597" className={`${FIELD} w-[90px] text-center`} />
      <button type="button" aria-label="Toggle extents" className="ml-1"><Icon name="bee" className="size-3.5" /></button>
      <label htmlFor="scale" className="ml-2 w-7">Scale</label>
      <input id="scale" defaultValue="1:281587264" className={`${FIELD} w-[61px] text-center`} />
      <button type="button" aria-label="Scale list" className="flex h-[19px] w-[17px] items-center justify-center rounded-r-[2px] border border-[#4a4a4a] bg-[#3a3a3a]"><Caret className="fill-[#1a1a1a]" /></button>
      <button type="button" aria-label="Lock scale" className="ml-[9px]"><Icon name="lock" className="size-3.5" /></button>
      <label htmlFor="magnifier" className="ml-1 w-[46px]">Magnifier</label>
      <input id="magnifier" defaultValue="100%" className={`${FIELD} w-[65px] pl-1`} />
      <Stepper label="magnifier" />
      <label htmlFor="rotation" className="ml-2 w-[44px]">Rotation</label>
      <input id="rotation" defaultValue="0.0 °" className={`${FIELD} w-[65px] pl-1`} />
      <Stepper label="rotation" />
      <label className="ml-1.5 flex w-[56px] items-center gap-1">
        <CheckBox label="Render" checked={render} onChange={() => setRender(!render)} />
        Render
      </label>
      <button type="button" className="ml-1 flex w-[74px] items-center gap-0.5 text-[#0f0f0f]">
        <Icon name="projection" className="size-3" />
        EPSG:4326
      </button>
      <button type="button" aria-label="Messages" className="ml-2.5"><Icon name="messages" className="size-3.5" /></button>
    </footer>
  );
}

function App() {
  return (
    <div className="flex min-h-screen flex-col bg-white px-[46px] pt-[31px] pb-[61px] font-[Inter,sans-serif]">
      <div className="flex flex-1 flex-col overflow-hidden rounded-[10px] border border-[#5c5c5c] bg-[#323232] shadow-[0_18px_42px_rgba(0,0,0,0.65)]">
        <header className="grid h-[23px] shrink-0 grid-cols-3 items-center border-b border-[#1c1c1c] bg-[#383838] px-1.5">
          <div className="flex gap-[7px]">
            <button type="button" aria-label="Close" className="size-2.5 rounded-full bg-[#ed6a5e]" />
            <button type="button" aria-label="Minimize" className="size-2.5 rounded-full bg-[#f5bf4f]" />
            <button type="button" aria-label="Zoom" className="size-2.5 rounded-full bg-[#61c554]" />
          </div>
          <h1 className="text-center text-[11px] font-semibold text-[#bdbdbd]">*Untitled Project — QGIS</h1>
        </header>

        <Toolbars />

        <div className="flex flex-1">
          <aside className="flex w-[294px] shrink-0 flex-col">
            <BrowserDock />
            <SplitterH />
            <section className="flex flex-1 flex-col">
              <DockTitle title="Advanced Digitizing" />
              <DockTools className="h-[25px]" items={['cad tools', '|', 'floater settings', 'parallel', 'perpendicular', '|', 'construction settings', '|', 'construction mode', '|', 'construction layer']} />
              <p className="flex flex-1 items-center justify-center text-[11px] text-[#d6d6d6]">CAD tools are not enabled for the current map tool</p>
            </section>
            <SplitterH />
            <LayersDock />
          </aside>
          <SplitterV />
          <MapCanvas />
          <SplitterV />
          <ToolboxDock />
        </div>

        <StatusBar />
      </div>
    </div>
  );
}

export default App;
